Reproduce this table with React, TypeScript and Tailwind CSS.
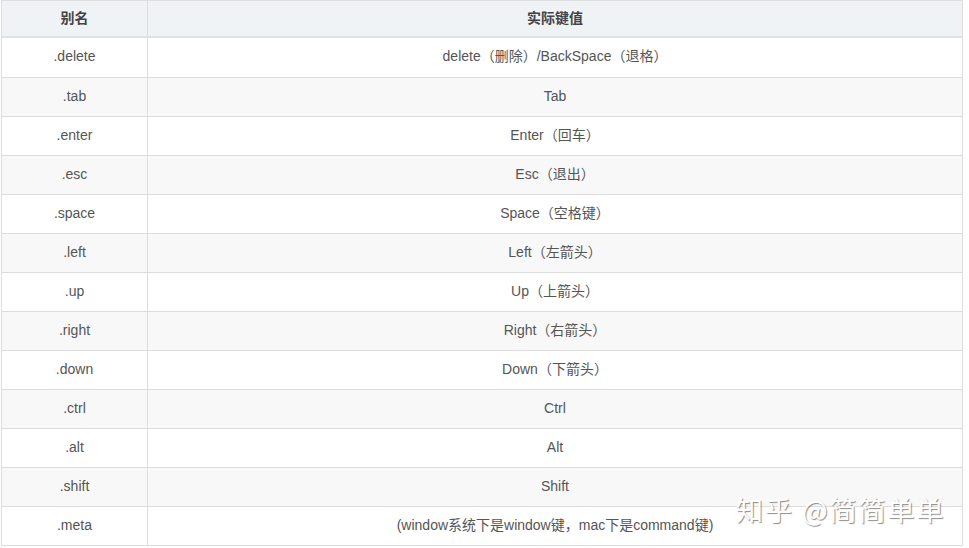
const rows: [string, string][] = [
  ['.delete', 'delete（删除）/BackSpace（退格）'],
  ['.tab', 'Tab'],
  ['.enter', 'Enter（回车）'],
  ['.esc', 'Esc（退出）'],
  ['.space', 'Space（空格键）'],
  ['.left', 'Left（左箭头）'],
  ['.up', 'Up（上箭头）'],
  ['.right', 'Right（右箭头）'],
  ['.down', 'Down（下箭头）'],
  ['.ctrl', 'Ctrl'],
  ['.alt', 'Alt'],
  ['.shift', 'Shift'],
  ['.meta', '(window系统下是window键，mac下是command键)'],
];

export default function App() {
  return (
    <div className="relative w-[969px] h-[548px] bg-white pl-px font-['Liberation_Sans','Noto_Sans_CJK_SC',sans-serif] text-[14px] text-[#555]">
      <div className="w-[962px] border border-[#ddd]">
        <div className="grid grid-cols-[146px_1fr] h-[37px] bg-[#f0f3f6] border-b-2 border-[#dde2e8] font-bold text-[#444]">
          <div className="flex items-center justify-center border-r border-[#ddd]">别名</div>
          <div className="flex items-center justify-center">实际键值</div>
        </div>
        {rows.map(([alias, value], i) => (
          <div
            key={alias}
            className={`grid grid-cols-[146px_1fr] h-[39px] pb-[2px] ${i > 0 ? 'border-t border-[#ddd]' : ''} ${i % 2 === 1 ? 'bg-[#f8f8f8]' : 'bg-white'}`}
          >
            <div className="flex items-center justify-center border-r border-[#ddd] -mb-[2px] pb-[2px]">{alias}</div>
            <div className="flex items-center justify-center">{value}</div>
          </div>
        ))}
      </div>
      <div className="absolute left-[736px] top-[490px] text-[27px] tracking-[2px] text-white font-['Noto_Sans_CJK_SC',sans-serif] [text-shadow:1px_1px_1px_rgba(0,0,0,0.45)]">
        知乎 @简简单单
      </div>
    </div>
  );
}
